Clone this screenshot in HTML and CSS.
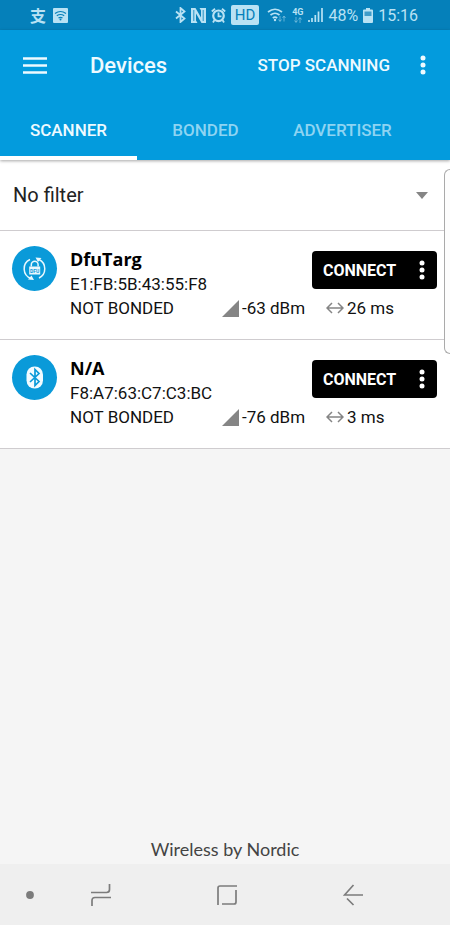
FILE: index.html
```html
<!DOCTYPE html>
<html lang="en">
<head>
<meta charset="utf-8">
<meta name="viewport" content="width=device-width, initial-scale=1">
<title>Devices</title>
<link rel="stylesheet" href="styles.css">
</head>
<body>
<svg class="defs" aria-hidden="true">
  <symbol id="dots" viewBox="0 0 6 20"><circle cx="3" cy="3" r="2.500"/><circle cx="3" cy="10" r="2.500"/><circle cx="3" cy="17" r="2.500"/></symbol>
  <symbol id="signal" viewBox="0 0 17 17"><path d="M17 0V17H0z"/></symbol>
  <symbol id="interval" viewBox="0 0 18 12"><path d="M1 6H17M6 1 1 6l5 5M12 1l5 5-5 5" fill="none" stroke="currentColor" stroke-width="1.500"/></symbol>
</svg>
<div class="statusbar">
  <div class="notifications">
    <span class="pay">支</span>
    <svg width="15" height="15" viewBox="0 0 15 15"><rect width="15" height="15" rx="1" fill="currentColor"/><g fill="none" stroke="#0880b9" stroke-width="1.200"><path d="M2 5.500q5.500-4 11 0M3.800 7.800q3.700-2.600 7.400 0M5.500 10q2-1.400 4 0"/></g><circle cx="7.500" cy="11.500" r="1" fill="#0880b9"/></svg>
  </div>
  <div class="system">
    <svg width="11" height="16" viewBox="0 0 11 16"><path d="M1 4.500 9.500 11.500 5.500 15V1l4 3.500L1 11.500" fill="none" stroke="currentColor" stroke-width="1.800"/></svg>
    <svg class="nfc" width="15" height="15" viewBox="0 0 15 15"><path d="M0 0h4.500L10 9.500V2.500L8.500 0H15v15h-4.500L5 5.500v7L6.500 15H0z" fill="currentColor"/><path d="M2.800 2v11M12.200 2v11" stroke="#0580ba" stroke-width=".8"/></svg>
    <svg width="15" height="15" viewBox="0 0 15 15"><circle cx="7.500" cy="7.800" r="5.300" fill="none" stroke="currentColor" stroke-width="2.200"/><path d="M7.500 4.500v3.800h3M.8 3.500 4 .8M14.200 3.500 11 .8M3.500 12 2 14.500M11.500 12l1.500 2.500" fill="none" stroke="currentColor" stroke-width="1.800"/></svg>
    <span class="hd">HD</span>
    <svg class="wifi" width="20" height="16" viewBox="0 0 20 16"><g fill="none" stroke="currentColor" stroke-width="1.700"><path d="M1 5q7-5.500 14 0M3.500 8q4.500-3.500 9 0M5.800 11q2.200-1.600 4.400 0"/></g><circle cx="8" cy="13" r="1.200" fill="currentColor"/><path d="M13 9v5M11.500 12.500 13 14.500l1.500-2M17 14.500v-5M15.500 11 17 9l1.500 2" fill="none" stroke="currentColor" opacity=".5"/></svg>
    <span class="net"><span>4G</span><svg width="10" height="6" viewBox="0 0 10 6"><path d="M3 0v5M1.500 3.500 3 5.500l1.500-2M7 6V1M5.500 2.500 7 .5l1.500 2" fill="none" stroke="currentColor" opacity=".5"/></svg></span>
    <svg width="15" height="14" viewBox="0 0 15 14"><path d="M1 14v-2M4 14v-4M7.300 14V7M10.500 14V3.500M14 14V0" stroke="currentColor" stroke-width="1.700"/></svg>
    <span>48%</span>
    <svg width="10" height="15" viewBox="0 0 10 15"><path d="M3 0h4v1.500h2q1 0 1 1V14q0 1-1 1H1q-1 0-1-1V2.500q0-1 1-1h2z" fill="currentColor"/><path d="M1.500 3.500h7V8h-7z" fill="#3f9cc9"/></svg>
    <span>15:16</span>
  </div>
</div>
<header class="appbar">
  <div class="toolbar">
    <button class="icon-btn" aria-label="Menu"><svg width="24" height="17" viewBox="0 0 24 17"><path d="M0 1.500h24M0 8.500h24M0 15.500h24" stroke="currentColor" stroke-width="2.300"/></svg></button>
    <h1>Devices</h1>
    <button class="scan">STOP SCANNING</button>
    <button class="icon-btn" aria-label="More options"><svg width="6" height="20" fill="currentColor"><use href="#dots"/></svg></button>
  </div>
  <nav class="tabs">
    <a class="tab active" href="#scanner">SCANNER</a>
    <a class="tab" href="#bonded">BONDED</a>
    <a class="tab" href="#advertiser">ADVERTISER</a>
  </nav>
</header>
<main id="scanner">
  <div class="edge-handle"></div>
  <div class="filter">
    <select aria-label="Filter"><option>No filter</option></select>
    <svg class="caret" width="12" height="7" viewBox="0 0 12 7"><path d="M0 0h12L6 7z" fill="currentColor"/></svg>
  </div>
  <ul class="devices">
    <li class="device">
      <span class="avatar"><svg width="45" height="45" viewBox="0 0 45 45"><g fill="none" stroke="#e9f7fd" stroke-width="1.500"><path d="M18 13.500A10.300 10.300 0 0 0 19 32.500M27 32A10.300 10.300 0 0 0 27 13.500"/><path d="M19.300 20.500v-1.800a3.400 3.400 0 0 1 6.800 0v1.800"/></g><path d="M23.500 11.500l6 .5-3.500 4zM22 34l-6-.5 3.500-4zM17.200 20.500h11v8h-11z" fill="#e9f7fd"/><text class="dfu" x="22.700" y="26.700" text-anchor="middle">DFU</text></svg></span>
      <div class="info">
        <h2>DfuTarg</h2>
        <p>E1:FB:5B:43:55:F8</p>
        <div class="stats">
          <span class="bond">NOT BONDED</span>
          <span class="rssi"><svg width="17" height="17" fill="currentColor"><use href="#signal"/></svg><span>-63 dBm</span></span>
          <span class="time"><svg width="18" height="12"><use href="#interval"/></svg><span>26 ms</span></span>
        </div>
      </div>
      <div class="connect"><button class="go">CONNECT</button><button class="more" aria-label="Connection options"><svg width="6" height="20" fill="currentColor"><use href="#dots"/></svg></button></div>
    </li>
    <li class="device">
      <span class="avatar"><svg width="45" height="45" viewBox="0 0 45 45"><rect x="14.500" y="11.500" width="16.500" height="22" rx="8" fill="#f2fbff"/><path d="M18 18 27 26.500 23 30.500V14.500l4 4L18 27" fill="none" stroke="#0a9ad9" stroke-width="1.700"/></svg></span>
      <div class="info">
        <h2>N/A</h2>
        <p>F8:A7:63:C7:C3:BC</p>
        <div class="stats">
          <span class="bond">NOT BONDED</span>
          <span class="rssi"><svg width="17" height="17" fill="currentColor"><use href="#signal"/></svg><span>-76 dBm</span></span>
          <span class="time"><svg width="18" height="12"><use href="#interval"/></svg><span>3 ms</span></span>
        </div>
      </div>
      <div class="connect"><button class="go">CONNECT</button><button class="more" aria-label="Connection options"><svg width="6" height="20" fill="currentColor"><use href="#dots"/></svg></button></div>
    </li>
  </ul>
</main>
<footer>Wireless by Nordic</footer>
<nav class="navbar" aria-label="System">
  <button class="pin" aria-label="Pin bar"><svg width="8" height="8"><circle cx="4" cy="4" r="3.900" fill="currentColor"/></svg></button>
  <button aria-label="Recent apps"><svg width="20" height="24" viewBox="0 0 20 24"><path d="M0 9.500h15.500q3 0 3-3V1M20 14.500H4q-3 0-3 3V23" fill="none" stroke="currentColor" stroke-width="1.700"/></svg></button>
  <button aria-label="Home"><svg width="20" height="20" viewBox="0 0 20 20"><path d="M1 20V3q0-2 2-2H20M19 5v12q0 2-2 2H5" fill="none" stroke="currentColor" stroke-width="1.700"/></svg></button>
  <button aria-label="Back"><svg width="20" height="22" viewBox="0 0 20 22"><path d="M20 11H1.500L10.500 1M4 14.500 10.500 21" fill="none" stroke="currentColor" stroke-width="1.700"/></svg></button>
</nav>
</body>
</html>
```
FILE: styles.css
```css
* { box-sizing: border-box; }
body {
  margin: 0;
  min-height: 100vh;
  display: flex;
  flex-direction: column;
  background: #f5f5f5;
  color: #111;
  font-family: Roboto, "Noto Sans CJK SC", sans-serif;
  font-size: 17px;
}
svg { display: block; flex: none; }
.defs { position: absolute; width: 0; height: 0; }
button {
  border: 0;
  padding: 0;
  background: none;
  color: inherit;
  font: inherit;
}
h1, h2, p, ul { margin: 0; padding: 0; font-weight: 400; }

.statusbar {
  height: 30px;
  padding: 0 32px 0 30px;
  display: flex;
  align-items: center;
  justify-content: space-between;
  background: #0580ba;
  color: #b9e2f4;
  font-size: 16px;
}
.notifications { display: flex; align-items: center; gap: 7px; }
.system { display: flex; align-items: center; gap: 5px; }
.pay { font: 700 16px/20px "Noto Sans CJK SC", sans-serif; }
.hd {
  width: 28px;
  border-radius: 2px;
  background: #b9e2f4;
  color: #0580ba;
  font-size: 15px;
  line-height: 20px;
  text-align: center;
}
.wifi { margin-left: 3px; }
.net { display: grid; justify-items: center; font-weight: 700; font-size: 9px; line-height: 9px; }

.appbar {
  position: relative;
  z-index: 1;
  background: #039bdd;
  color: #eefaff;
  box-shadow: 0 1px 3px rgba(0, 0, 0, .35);
}
.toolbar {
  height: 70px;
  padding: 0 12px;
  display: flex;
  align-items: center;
}
.icon-btn { width: 30px; height: 40px; display: grid; place-items: center; }
.toolbar .icon-btn:first-child { width: 46px; }
h1 { flex: 1; padding-left: 32px; font-size: 22px; font-weight: 500; }
.scan { font-weight: 500; margin-right: 18px; }
.tabs { display: flex; }
.tab {
  flex: 0 1 137px;
  height: 60px;
  border-bottom: 4px solid transparent;
  line-height: 60px;
  text-align: center;
  text-decoration: none;
  font-weight: 500;
  color: #8ed4f2;
}
.tab.active { color: #eefaff; border-color: #fff; }

main { position: relative; background: #fff; }
.edge-handle {
  position: absolute;
  top: 9px;
  right: 0;
  width: 6px;
  height: 185px;
  border: 1px solid #aaa;
  border-right: 0;
  border-radius: 7px 0 0 7px;
  background: #fdfdfd;
}
.filter {
  display: flex;
  align-items: center;
  height: 71px;
  padding: 0 22px 0 13px;
  border-bottom: 1px solid #cfcccf;
}
.filter select {
  flex: 1;
  appearance: none;
  border: 0;
  padding: 0;
  background: none;
  color: #222;
  font: 400 20px/28px Roboto, sans-serif;
}
.caret { color: #858585; }
.devices { list-style: none; }
.device {
  display: grid;
  grid-template-columns: 45px 1fr 125px;
  column-gap: 13px;
  height: 109px;
  padding: 15px 13px 0 12px;
  border-bottom: 1px solid #cfcccf;
}
.avatar { height: 45px; border-radius: 50%; background: #0a9ad9; }
.dfu { font: 700 5px Roboto, sans-serif; fill: #0a9ad9; }
.info { grid-column: 2 / 4; grid-row: 1; line-height: 24px; }
h2 { font: 700 18px/26px "Open Sans", sans-serif; color: #000; }
.stats { display: flex; white-space: nowrap; }
.bond { width: 152px; }
.rssi, .time { display: flex; align-items: center; gap: 3px; }
.rssi { width: 104px; }
.rssi svg, .time svg { color: #858585; }
.connect {
  grid-column: 3;
  grid-row: 1;
  display: flex;
  align-items: center;
  height: 38px;
  margin-top: 5px;
  padding: 0 4px 0 11px;
  border-radius: 4px;
  background: #000;
  color: #fff;
}
.go { flex: 1; text-align: left; font-weight: 700; font-size: 16px; }
.more { width: 22px; height: 38px; display: grid; place-items: center; }

footer {
  margin-top: auto;
  padding-bottom: 3px;
  text-align: center;
  color: #444;
  font: 400 18px/24px Lato, sans-serif;
}
.navbar {
  height: 61px;
  display: grid;
  grid-template-columns: 38fr 126fr 126fr 126fr 34fr;
  align-items: center;
  justify-items: center;
  background: #efefef;
  color: #7c7c7c;
}
.navbar button { width: 20px; height: 40px; display: grid; place-items: center; }
.navbar .pin { width: 16px; justify-self: end; }
```
